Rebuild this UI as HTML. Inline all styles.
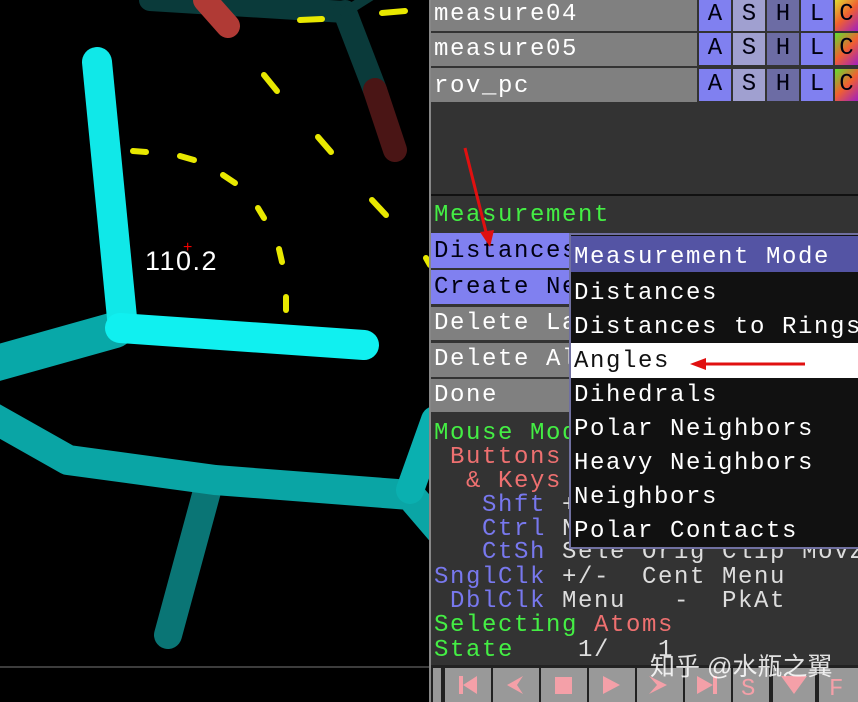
<!DOCTYPE html>
<html><head><style>
*{margin:0;padding:0;box-sizing:border-box}
body{width:858px;height:702px;background:#000;position:relative;overflow:hidden;font-family:"Liberation Mono",monospace}
.a{position:absolute}
.t{position:absolute;font-size:24px;letter-spacing:1.6px;line-height:24px;white-space:pre}
.btn{position:absolute;height:32px;color:#001;font-size:24px;text-align:center;line-height:32px}
.g{color:#44ee44}.r{color:#ee7070}.b{color:#7878ee}.w{color:#ddd}
</style></head><body>
<svg class="a" style="left:0;top:0" width="430" height="702">
<g stroke-linecap="round" fill="none">
<line x1="150" y1="0" x2="345" y2="12" stroke="#0a3a3a" stroke-width="22"/>
<line x1="345" y1="12" x2="375" y2="90" stroke="#0a3a3a" stroke-width="24"/>
<line x1="375" y1="90" x2="395" y2="150" stroke="#4a1515" stroke-width="24"/>
<line x1="205" y1="0" x2="228" y2="26" stroke="#b03a35" stroke-width="24"/>
<line x1="345" y1="12" x2="380" y2="-10" stroke="#0a3a3a" stroke-width="10"/>
<line x1="210" y1="480" x2="168" y2="635" stroke="#0a7575" stroke-width="28"/>
<polyline points="-10,416 68,460 215,480 410,495 440,530" stroke="#0aa5a5" stroke-width="30" stroke-linejoin="round"/>
<line x1="410" y1="490" x2="435" y2="420" stroke="#0ab0b0" stroke-width="28"/>
<line x1="-10" y1="365" x2="115" y2="330" stroke="#08a8a8" stroke-width="36"/>
<line x1="97" y1="62" x2="122" y2="318" stroke="#10e8e8" stroke-width="30"/>
<line x1="120" y1="328" x2="364" y2="345" stroke="#10f0f0" stroke-width="30"/>
</g>
<g stroke="#e8e800" stroke-width="6" stroke-linecap="round">
<line x1="133" y1="151" x2="146" y2="152"/><line x1="180" y1="156" x2="194" y2="160"/>
<line x1="223" y1="175" x2="235" y2="183"/><line x1="258" y1="208" x2="264" y2="218"/>
<line x1="279" y1="249" x2="282" y2="262"/><line x1="286" y1="297" x2="286" y2="310"/>
<line x1="264" y1="75" x2="277" y2="91"/><line x1="318" y1="137" x2="331" y2="152"/>
<line x1="372" y1="200" x2="386" y2="215"/><line x1="426" y1="258" x2="430" y2="265"/>
<line x1="300" y1="20" x2="322" y2="19"/><line x1="382" y1="13" x2="405" y2="11"/>
</g>
<text x="145" y="270" fill="#fff" font-family="Liberation Sans,sans-serif" font-size="27" letter-spacing="1.5">110.2</text>
<text x="183" y="252" fill="#e00" font-family="Liberation Sans,sans-serif" font-size="16">+</text>
<line x1="0" y1="667" x2="430" y2="667" stroke="#777" stroke-width="1"/>
</svg>
<div class="a" style="left:429px;top:0;width:429px;height:702px;background:#333"></div>
<div class="a" style="left:429px;top:0;width:2px;height:702px;background:#888"></div>
<div class="a" style="left:431px;top:0;width:266px;height:31px;background:#808080"></div>
<div class="a" style="left:431px;top:33px;width:266px;height:33px;background:#808080"></div>
<div class="a" style="left:431px;top:68px;width:266px;height:34px;background:#808080"></div>
<div class="t" style="left:434px;top:3px;color:#fff">measure04</div>
<div class="t" style="left:434px;top:38px;color:#fff">measure05</div>
<div class="t" style="left:434px;top:75px;color:#fff">rov_pc</div>
<div class="btn" style="left:699px;top:-1px;width:32px;background:#8080f0">A</div>
<div class="btn" style="left:733px;top:-1px;width:32px;background:#a0a0d0">S</div>
<div class="btn" style="left:767px;top:-1px;width:32px;background:#6c6ca4">H</div>
<div class="btn" style="left:801px;top:-1px;width:32px;background:#8080f0">L</div>
<div class="btn" style="left:835px;top:-1px;width:23px;background:linear-gradient(135deg,#e0e030,#f06030 50%,#a020c0)">C</div>
<div class="btn" style="left:699px;top:33px;width:32px;background:#8080f0">A</div>
<div class="btn" style="left:733px;top:33px;width:32px;background:#a0a0d0">S</div>
<div class="btn" style="left:767px;top:33px;width:32px;background:#6c6ca4">H</div>
<div class="btn" style="left:801px;top:33px;width:32px;background:#8080f0">L</div>
<div class="btn" style="left:835px;top:33px;width:23px;background:linear-gradient(135deg,#60e030,#f06030 50%,#a020c0)">C</div>
<div class="btn" style="left:699px;top:69px;width:32px;background:#8080f0">A</div>
<div class="btn" style="left:733px;top:69px;width:32px;background:#a0a0d0">S</div>
<div class="btn" style="left:767px;top:69px;width:32px;background:#6c6ca4">H</div>
<div class="btn" style="left:801px;top:69px;width:32px;background:#8080f0">L</div>
<div class="btn" style="left:835px;top:69px;width:23px;background:linear-gradient(135deg,#60e030,#f06030 50%,#a020c0)">C</div>
<div class="a" style="left:431px;top:194px;width:427px;height:2px;background:#111"></div>
<div class="t g" style="left:434px;top:204px">Measurement</div>
<div class="a" style="left:431px;top:233px;width:140px;height:35px;background:#8080f0"></div>
<div class="a" style="left:431px;top:270px;width:140px;height:34px;background:#8080f0"></div>
<div class="a" style="left:431px;top:307px;width:140px;height:33px;background:#808080"></div>
<div class="a" style="left:431px;top:343px;width:140px;height:34px;background:#808080"></div>
<div class="a" style="left:431px;top:379px;width:140px;height:33px;background:#808080"></div>
<div class="t" style="left:434px;top:240px;color:#001">Distances</div>
<div class="t" style="left:434px;top:276px;color:#001">Create Ne</div>
<div class="t w" style="left:434px;top:312px;color:#fff">Delete La</div>
<div class="t w" style="left:434px;top:348px;color:#fff">Delete Al</div>
<div class="t w" style="left:434px;top:384px;color:#fff">Done</div>
<div class="t g" style="left:434px;top:422px">Mouse Mode</div>
<div class="t r" style="left:434px;top:446px"> Buttons</div>
<div class="t r" style="left:434px;top:470px">  &amp; Keys <span class="w">R</span></div>
<div class="t b" style="left:434px;top:494px">   Shft <span class="w">+</span></div>
<div class="t b" style="left:434px;top:518px">   Ctrl <span class="w">N</span></div>
<div class="t b" style="left:434px;top:541px">   CtSh <span class="w">Sele Orig Clip MovZ</span></div>
<div class="t b" style="left:434px;top:566px">SnglClk <span class="w">+/-  Cent Menu</span></div>
<div class="t b" style="left:434px;top:590px"> DblClk <span class="w">Menu   -  PkAt</span></div>
<div class="t g" style="left:434px;top:614px">Selecting <span class="r">Atoms</span></div>
<div class="t g" style="left:434px;top:639px">State    <span class="w">1/   1</span></div>
<div class="a" style="left:431px;top:665px;width:427px;height:37px;background:#222"></div>
<svg class="a" style="left:431px;top:666px" width="427" height="36">
<g fill="#999"><rect x="2" y="2" width="8" height="34"/><rect x="14" y="2" width="46" height="34"/><rect x="62" y="2" width="46" height="34"/><rect x="110" y="2" width="46" height="34"/><rect x="158" y="2" width="46" height="34"/><rect x="206" y="2" width="46" height="34"/><rect x="254" y="2" width="46" height="34"/><rect x="302" y="2" width="36" height="34"/><rect x="342" y="2" width="42" height="34"/><rect x="388" y="2" width="39" height="34"/></g>
<g fill="#f4a0a8"><rect x="28" y="10" width="4" height="18"/><polygon points="32,19 46,10 46,28"/>
<polygon points="76,19 92,10 86,19 92,28"/><rect x="124" y="11" width="17" height="17"/>
<polygon points="172,10 189,19 172,28"/><polygon points="218,10 236,19 218,28 226,19"/>
<polygon points="266,10 282,19 266,28"/><rect x="282" y="10" width="4" height="18"/>
<polygon points="350,10 376,10 363,28"/></g>
<text x="310" y="29" fill="#f4a0a8" font-size="24" font-family="Liberation Mono">S</text>
<text x="398" y="29" fill="#f4a0a8" font-size="24" font-family="Liberation Mono">F</text>
</svg>
<div class="a" style="left:650px;top:647px;font-family:'Liberation Sans','Noto Sans CJK SC',sans-serif;font-size:25px;color:rgba(255,255,255,0.85)">知乎 @水瓶之翼</div>
<div class="a" style="left:569px;top:233px;width:289px;height:316px;background:#111;border:2px solid #7070a0;border-right:none"></div>
<div class="a" style="left:571px;top:236px;width:287px;height:36px;background:#5454a4"></div>
<div class="a" style="left:571px;top:343px;width:287px;height:35px;background:#fff"></div>
<div class="t" style="left:574px;top:246px;color:#fff">Measurement Mode</div>
<div class="t" style="left:574px;top:282px;color:#fff">Distances</div>
<div class="t" style="left:574px;top:316px;color:#fff">Distances to Rings</div>
<div class="t" style="left:574px;top:350px;color:#111">Angles</div>
<div class="t" style="left:574px;top:384px;color:#fff">Dihedrals</div>
<div class="t" style="left:574px;top:418px;color:#fff">Polar Neighbors</div>
<div class="t" style="left:574px;top:452px;color:#fff">Heavy Neighbors</div>
<div class="t" style="left:574px;top:486px;color:#fff">Neighbors</div>
<div class="t" style="left:574px;top:520px;color:#fff">Polar Contacts</div>
<svg class="a" style="left:0;top:0" width="858" height="702">
<line x1="465" y1="148" x2="487" y2="236" stroke="#e01010" stroke-width="3"/>
<polygon points="480,232 494,230 490,247" fill="#e01010"/>
<line x1="705" y1="364" x2="805" y2="364" stroke="#e01010" stroke-width="3"/>
<polygon points="706,358 706,370 690,364" fill="#e01010"/>
</svg>
</body></html>
